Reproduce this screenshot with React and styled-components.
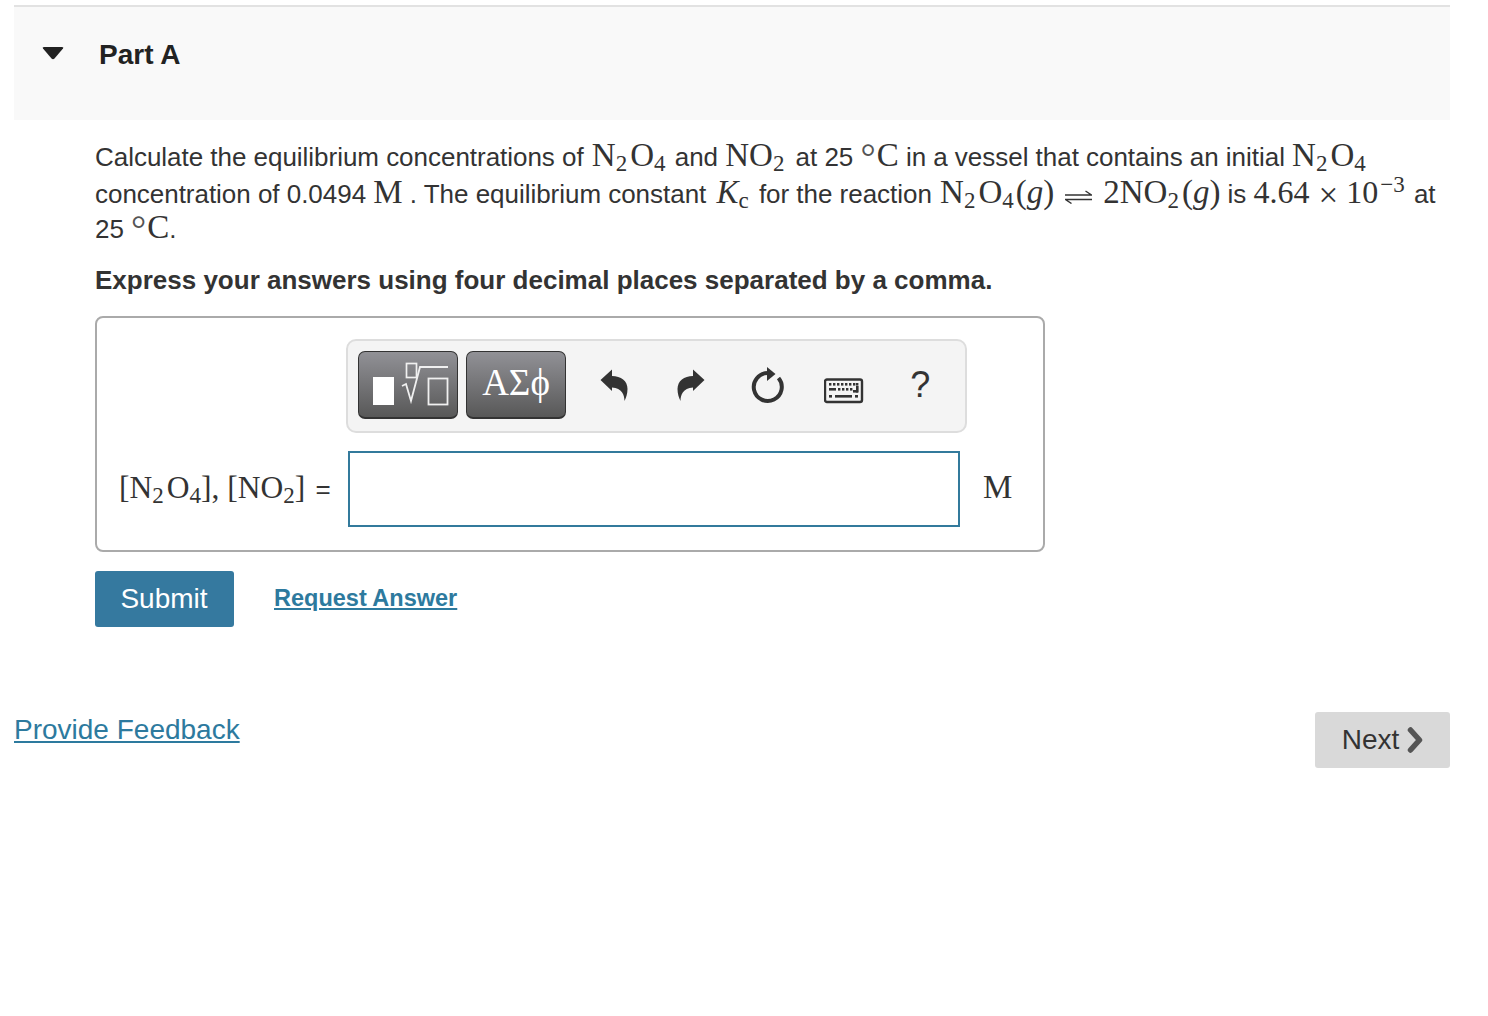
import React from "react";
import styled, { createGlobalStyle } from "styled-components";

const Global = createGlobalStyle`
  html, body { margin: 0; padding: 0; background: #fff; }
  body { font-family: "Liberation Sans", Arial, sans-serif; color: #333; }
`;

const Page = styled.div`
  width: 1436px;
  margin-left: 14px;
  padding-top: 5px;
`;
const PartHeader = styled.div`
  height: 115px;
  box-sizing: border-box;
  border-top: 2px solid #e2e2e2;
  background: #f9f9f9;
  display: flex;
  align-items: flex-start;
  padding: 32px 0 0 28px;
`;
const Caret = styled.svg`
  width: 22px;
  height: 13px;
  margin-top: 8px;
  flex: none;
`;
const PartTitle = styled.h2`
  margin: 0 0 0 35px;
  font-size: 28px;
  line-height: 32px;
  font-weight: 700;
  color: #222;
`;
const Body = styled.div`
  padding: 19px 0 0 81px;
`;
const Question = styled.div`
  font-size: 26px;
  letter-spacing: -0.03px;
  color: #333;
`;
const Line = styled.div`
  height: ${(p) => p.$h || 37}px;
  line-height: ${(p) => p.$h || 37}px;
  white-space: nowrap;
`;
const M = styled.span`
  font-family: "Liberation Serif", "Times New Roman", serif;
  font-size: ${(p) => p.$size || 33}px;
  line-height: 0;
  letter-spacing: 0;
  font-style: ${(p) => (p.$it ? "italic" : "normal")};
  margin: 0 ${(p) => p.$mr ?? 0}px 0 ${(p) => p.$ml ?? 0}px;
`;
const Times = styled.span`
  font-family: "Liberation Serif", "Times New Roman", serif;
  font-size: 35px;
  line-height: 0;
  vertical-align: -4px;
  letter-spacing: 0;
  margin: 0 8px 0 9px;
`;
const Sub = styled.sub`
  font-family: "Liberation Serif", "Times New Roman", serif;
  font-size: 23px;
  line-height: 0;
  vertical-align: -5px;
  letter-spacing: 0;
  margin-right: ${(p) => p.$mr ?? 0}px;
`;
const Sup = styled.sup`
  font-family: "Liberation Serif", "Times New Roman", serif;
  font-size: 23px;
  line-height: 0;
  vertical-align: 11px;
  letter-spacing: 0;
  margin: 0 ${(p) => p.$mr ?? 0}px 0 ${(p) => p.$ml ?? 0}px;
`;
const Degree = styled.span`
  font-family: "Liberation Serif", "Times New Roman", serif;
  font-size: 38px;
  line-height: 0;
  vertical-align: -4px;
  letter-spacing: 0;
  margin-right: 1px;
  color: #555;
`;
const Equilibrium = styled.svg`
  width: 27px;
  height: 14px;
  margin: 0 11px;
  vertical-align: -1px;
`;
const Instruction = styled.p`
  margin: 20px 0 0;
  font-size: 26px;
  line-height: 30px;
  font-weight: 700;
  color: #333;
`;
const AnswerBox = styled.div`
  width: 950px;
  height: 236px;
  box-sizing: border-box;
  margin-top: 21px;
  border: 2px solid #aaa;
  border-radius: 8px;
  padding: 21px 0 0 21px;
`;
const Toolbar = styled.div`
  width: 621px;
  height: 94px;
  box-sizing: border-box;
  margin-left: 228px;
  background: #f4f4f4;
  border: 2px solid #ddd;
  border-radius: 10px;
  display: flex;
  align-items: center;
  padding: 0 0 2px 10px;
`;
const PaletteButton = styled.div`
  width: 100px;
  height: 68px;
  flex: none;
  box-sizing: border-box;
  margin-right: 8px;
  border: 1px solid #333;
  border-bottom-width: 2px;
  border-radius: 7px;
  background: linear-gradient(#919196, #585858);
  display: flex;
  align-items: center;
  justify-content: center;
  color: #fff;
  font-family: "Liberation Serif", serif;
  font-size: 37px;
  padding-bottom: ${(p) => p.$pb ?? 0}px;
`;
const Tools = styled.div`
  display: flex;
  align-items: center;
  margin-left: 2px;
  flex: none;
`;
const Tool = styled.div`
  width: 76.5px;
  display: flex;
  justify-content: center;
  align-items: center;
  color: #333;
  margin-top: ${(p) => p.$mt ?? 0}px;
`;
const HelpMark = styled.span`
  font-size: 36px;
  line-height: 40px;
  color: #333;
`;
const AnswerRow = styled.div`
  display: flex;
  align-items: center;
  margin-top: 18px;
  height: 76px;
`;
const Label = styled.div`
  width: 230px;
  flex: none;
  font-size: 26px;
  line-height: 30px;
  white-space: nowrap;
  padding-left: 1px;
  box-sizing: border-box;
`;
const Input = styled.div`
  width: 612px;
  height: 76px;
  box-sizing: border-box;
  border: 2px solid #337a9c;
  background: #fff;
  flex: none;
`;
const Unit = styled.div`
  margin: 0 0 3px 23px;
  font-family: "Liberation Serif", serif;
  font-size: 33px;
  color: #333;
`;
const Actions = styled.div`
  display: flex;
  align-items: center;
  margin-top: 19px;
`;
const Submit = styled.button`
  width: 139px;
  height: 56px;
  border: 0;
  border-radius: 3px;
  background: #35799f;
  color: #fff;
  font-family: inherit;
  font-size: 28px;
  padding: 0 1px 0 0;
`;
const RequestLink = styled.a`
  margin: 0 0 2px 40px;
  font-size: 23.5px;
  font-weight: 700;
  color: #2d7a9e;
  text-decoration: underline;
`;
const Footer = styled.div`
  display: flex;
  justify-content: space-between;
  align-items: flex-start;
  margin-top: 85px;
`;
const Feedback = styled.a`
  font-size: 28px;
  line-height: 36px;
  color: #2d7a9e;
  text-decoration: underline;
`;
const NextButton = styled.div`
  width: 135px;
  height: 56px;
  box-sizing: border-box;
  padding: 0 0 1px 0;
  background: #d9d9d9;
  border-radius: 3px;
  display: flex;
  align-items: center;
  justify-content: center;
  gap: 8px;
  font-size: 28px;
  color: #333;
`;

const N2O4 = ({ ml, mr, size }) => (
  <M $ml={ml} $mr={mr} $size={size}>
    N<Sub>2</Sub>
    <M $ml={3} $size={size}>O</M>
    <Sub>4</Sub>
  </M>
);

const Undo = ({ flip }) => (
  <svg width="30" height="34" viewBox="0 0 30 34" style={flip ? { transform: "scaleX(-1)" } : undefined}>
    <path
      fill="#333"
      d="M1.5 12 L13 1.5 V8 C22 8 28.5 13 28.5 21 C28.5 26 27 30 25.5 33 C25.5 27 23 20 13 19.5 V23 Z"
    />
  </svg>
);

const Reset = () => (
  <svg width="36" height="38" viewBox="-1 0 36 38">
    <path d="M28.5 12 A14 14 0 1 1 18 7" fill="none" stroke="#333" strokeWidth="4" />
    <path d="M17 1 L25.5 8 L17 15 Z" fill="#333" />
  </svg>
);

const Keyboard = () => (
  <svg width="40" height="26" viewBox="0 0 40 26">
    <rect x="1" y="1.5" width="37" height="22.5" rx="2" fill="none" stroke="#333" strokeWidth="2.4" />
    <g fill="#333">
      {[5, 9, 13, 17, 21, 25, 29, 32].map((x) => (
        <rect key={x} x={x} y="5" width="2.4" height="2.6" />
      ))}
      <rect x="5" y="10" width="7" height="2.6" />
      {[14, 18, 22, 26].map((x) => (
        <rect key={x} x={x} y="10" width="2.4" height="2.6" />
      ))}
      <rect x="32" y="8" width="2.6" height="6.5" />
      <rect x="29" y="12" width="5" height="2.6" />
      <rect x="5" y="17" width="3" height="2.6" />
      <rect x="11" y="17" width="17" height="2.6" />
      <rect x="31" y="17" width="3" height="2.6" />
    </g>
  </svg>
);

const RootIcon = () => (
  <svg width="98" height="65" viewBox="0 0 98 65">
    <rect x="14" y="25" width="21" height="28" fill="#fff" />
    <rect x="47.5" y="11.5" width="10" height="14" fill="none" stroke="#f0f0f0" strokeWidth="1.7" />
    <path d="M43 34 L47 32 L52 49 L61 15 H89" fill="none" stroke="#f0f0f0" strokeWidth="1.8" />
    <rect x="69.5" y="26.5" width="19" height="26" fill="none" stroke="#f0f0f0" strokeWidth="1.8" />
  </svg>
);

export default function App() {
  return (
    <>
      <Global />
      <Page>
        <PartHeader>
          <Caret viewBox="0 0 22 13">
            <path d="M1 1.5 Q0 0 2 0 H20 Q22 0 21 1.5 L12.5 11.5 Q11 13 9.5 11.5 Z" fill="#222" />
          </Caret>
          <PartTitle>Part A</PartTitle>
        </PartHeader>
        <Body>
          <Question>
            <Line>
              Calculate the equilibrium concentrations of <N2O4 ml={1} mr={2} /> and{" "}
              <M $mr={4}>
                NO<Sub>2</Sub>
              </M>{" "}
              at 25 <Degree>°</Degree>
              <M>C</M> in a vessel that contains an initial <N2O4 />
            </Line>
            <Line>
              concentration of 0.0494 <M>M</M> . The equilibrium constant <M $it $ml={3}>K</M>
              <Sub $mr={3}>c</Sub> for the reaction <N2O4 ml={1} />
              <M $ml={2}>
                (<M $it>g</M>)
              </M>
              <Equilibrium viewBox="0 0 27 14" role="img" aria-label="⇌">
                <path d="M0 5 H26.5 L20.5 1 M27 9.5 H0.5 L6.5 13.5" fill="none" stroke="#333" strokeWidth="1.4" />
              </Equilibrium>
              <M>
                2NO<Sub>2</Sub>
              </M>
              <M $ml={3}>
                (<M $it>g</M>)
              </M>{" "}
              is <M $size={32}>4.64</M>
              <Times>×</Times>
              <M $size={32}>10</M>
              <Sup $ml={2} $mr={2}>−3</Sup> at
            </Line>
            <Line $h={32}>
              25 <Degree>°</Degree>
              <M>C</M>.
            </Line>
          </Question>
          <Instruction>Express your answers using four decimal places separated by a comma.</Instruction>
          <AnswerBox>
            <Toolbar>
              <PaletteButton>
                <RootIcon />
              </PaletteButton>
              <PaletteButton $pb={4}>ΑΣϕ</PaletteButton>
              <Tools>
                <Tool>
                  <Undo />
                </Tool>
                <Tool>
                  <Undo flip />
                </Tool>
                <Tool>
                  <Reset />
                </Tool>
                <Tool $mt={12}>
                  <Keyboard />
                </Tool>
                <Tool>
                  <HelpMark>?</HelpMark>
                </Tool>
              </Tools>
            </Toolbar>
            <AnswerRow>
              <Label>
                <M $size={31.5} $mr={3}>
                  [N<Sub>2</Sub>
                  <M $ml={3} $size={31.5}>O</M>
                  <Sub>4</Sub>], [NO<Sub>2</Sub>]
                </M>{" "}
                =
              </Label>
              <Input />
              <Unit>M</Unit>
            </AnswerRow>
          </AnswerBox>
          <Actions>
            <Submit>Submit</Submit>
            <RequestLink>Request Answer</RequestLink>
          </Actions>
        </Body>
        <Footer>
          <Feedback>Provide Feedback</Feedback>
          <NextButton>
            Next
            <svg width="16" height="26" viewBox="0 0 16 26">
              <path d="M3.5 3 L12.5 13 L3.5 23" fill="none" stroke="#555" strokeWidth="5.5" strokeLinejoin="round" strokeLinecap="round" />
            </svg>
          </NextButton>
        </Footer>
      </Page>
    </>
  );
}
